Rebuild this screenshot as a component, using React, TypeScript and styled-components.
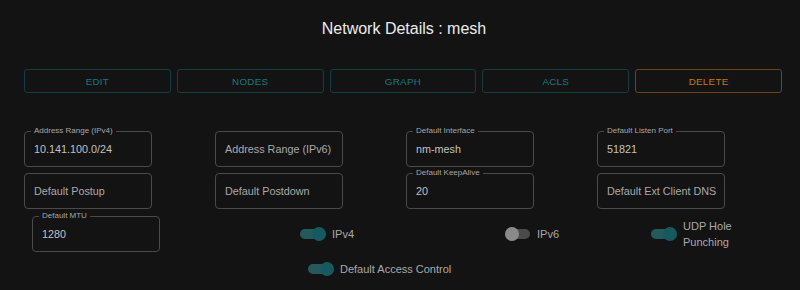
import React from "react";
import styled, { createGlobalStyle } from "styled-components";

const GlobalStyle = createGlobalStyle`
  body {
    margin: 0;
    background: #131313;
    font-family: "Liberation Sans", Arial, sans-serif;
  }
`;

const Page = styled.div`
  width: 800px;
  height: 290px;
  background: #131313;
  overflow: hidden;
`;

const Title = styled.h1`
  margin: 0;
  padding: 19px 0 0 8px;
  height: 20px;
  line-height: 20px;
  text-align: center;
  font-size: 16px;
  font-weight: 400;
  color: #ececec;
`;

const ButtonRow = styled.div`
  display: flex;
  gap: 6px;
  margin-top: 30px;
  padding: 0 18px 0 24px;
`;

const ActionButton = styled.button<{ $danger?: boolean }>`
  flex: 1;
  height: 24px;
  background: transparent;
  border: 1px solid ${(p) => (p.$danger ? "#6a4519" : "#153d40")};
  border-radius: 3px;
  color: ${(p) => (p.$danger ? "#c7761c" : "#177880")};
  font-family: "Liberation Sans", Arial, sans-serif;
  font-size: 9.8px;
  letter-spacing: 0.3px;
  text-transform: uppercase;
  cursor: pointer;
`;

const FieldGrid = styled.div`
  display: grid;
  grid-template-columns: repeat(4, 128px);
  column-gap: 63px;
  row-gap: 6px;
  margin-top: 38px;
  padding-left: 24px;
`;

const FieldBox = styled.div`
  position: relative;
  box-sizing: border-box;
  width: 128px;
  height: 36px;
  border: 1px solid #4a4a4a;
  border-radius: 4px;
  display: flex;
  align-items: center;
  padding-left: 9px;
`;

const FieldLabel = styled.span`
  position: absolute;
  top: -6px;
  left: 6px;
  padding: 0 3px;
  background: #131313;
  font-size: 8px;
  line-height: 10px;
  color: #a6a6a6;
`;

const FieldValue = styled.span<{ $placeholder?: boolean }>`
  font-size: 10.8px;
  color: ${(p) => (p.$placeholder ? "#a9a9a9" : "#c2c2c2")};
`;

const OptionRow = styled.div`
  display: grid;
  grid-template-columns: 268px 205px 146px auto;
  align-items: center;
  margin-top: 7px;
  padding-left: 32px;
`;

const AccessRow = styled.div`
  display: flex;
  margin-top: 9px;
  padding-left: 308px;
`;

const SwitchWrap = styled.label`
  display: flex;
  align-items: center;
  gap: 6px;
`;

const SwitchRoot = styled.span`
  position: relative;
  display: inline-block;
  flex: none;
  width: 26px;
  height: 14px;
`;

const SwitchTrack = styled.span<{ $on: boolean }>`
  position: absolute;
  left: 0;
  top: 2px;
  width: 25px;
  height: 10px;
  border-radius: 5px;
  background: ${(p) =>
    p.$on
      ? "radial-gradient(circle, #245a5c 0.8px, #163a3c 1px) 0 0 / 2px 2px"
      : "#4a4a4a"};
`;

const SwitchKnob = styled.span<{ $on: boolean }>`
  position: absolute;
  top: 0;
  left: ${(p) => (p.$on ? "12px" : "0")};
  width: 14px;
  height: 14px;
  border-radius: 50%;
  background: ${(p) => (p.$on ? "#175a5d" : "#8a8a8a")};
`;

const SwitchText = styled.span<{ $narrow?: boolean }>`
  font-size: 11px;
  line-height: 16px;
  color: #a9a9a9;
  width: ${(p) => (p.$narrow ? "52px" : "auto")};
`;

type FieldProps = { label?: string; value?: string; placeholder?: string };

const Field = ({ label, value, placeholder }: FieldProps) => (
  <FieldBox>
    {label && <FieldLabel>{label}</FieldLabel>}
    {value ? (
      <FieldValue>{value}</FieldValue>
    ) : (
      <FieldValue $placeholder>{placeholder}</FieldValue>
    )}
  </FieldBox>
);

type ToggleProps = { on: boolean; text: string; narrow?: boolean };

const Toggle = ({ on, text, narrow }: ToggleProps) => (
  <SwitchWrap>
    <SwitchRoot>
      <SwitchTrack $on={on} />
      <SwitchKnob $on={on} />
    </SwitchRoot>
    <SwitchText $narrow={narrow}>{text}</SwitchText>
  </SwitchWrap>
);

const buttons = ["Edit", "Nodes", "Graph", "ACLs"];

export default function App() {
  return (
    <Page>
      <GlobalStyle />
      <Title>Network Details : mesh</Title>
      <ButtonRow>
        {buttons.map((b) => (
          <ActionButton key={b}>{b}</ActionButton>
        ))}
        <ActionButton $danger>Delete</ActionButton>
      </ButtonRow>
      <FieldGrid>
        <Field label="Address Range (IPv4)" value="10.141.100.0/24" />
        <Field placeholder="Address Range (IPv6)" />
        <Field label="Default Interface" value="nm-mesh" />
        <Field label="Default Listen Port" value="51821" />
        <Field placeholder="Default Postup" />
        <Field placeholder="Default Postdown" />
        <Field label="Default KeepAlive" value="20" />
        <Field placeholder="Default Ext Client DNS" />
      </FieldGrid>
      <OptionRow>
        <Field label="Default MTU" value="1280" />
        <Toggle on text="IPv4" />
        <Toggle on={false} text="IPv6" />
        <Toggle on text="UDP Hole Punching" narrow />
      </OptionRow>
      <AccessRow>
        <Toggle on text="Default Access Control" />
      </AccessRow>
    </Page>
  );
}
